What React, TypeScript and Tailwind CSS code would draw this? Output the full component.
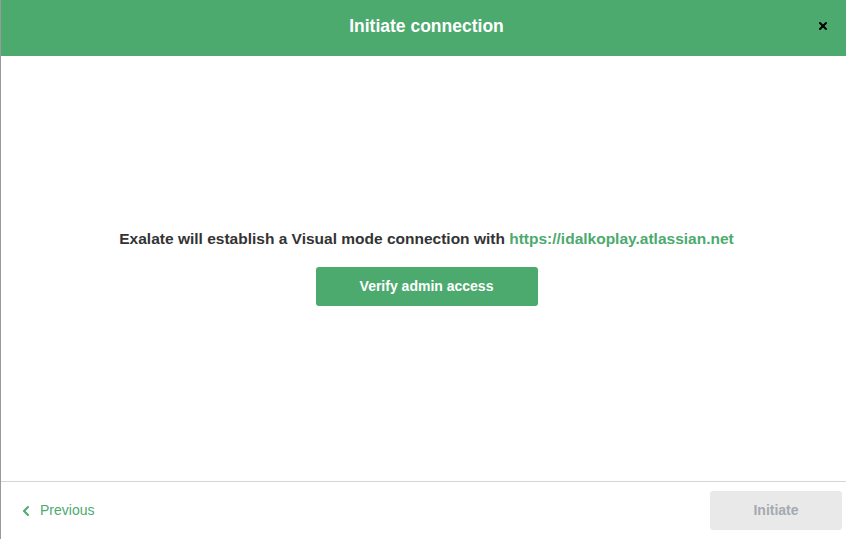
import { ChevronLeft, X } from 'lucide-react'

export default function App() {
  return (
    <div
      className="flex h-[539px] w-[846px] flex-col border-l border-[#9a9a9a] bg-white text-[#333]"
      style={{ fontFamily: '"Liberation Sans", Arial, sans-serif' }}
    >
      <header className="relative flex h-14 shrink-0 items-center justify-center bg-[#4caa6e] pb-[3px] pl-[6px]">
        <h1 className="text-[17.5px] font-bold text-white">Initiate connection</h1>
        <button className="absolute right-[17px] top-[20px] text-black">
          <X size={12} strokeWidth={4} />
        </button>
      </header>

      <main className="flex flex-1 flex-col items-center justify-center gap-[16px] pb-[4px] pl-[6px]">
        <p className="text-[15.5px] font-bold">
          Exalate will establish a Visual mode connection with{' '}
          <span className="text-[#4caa6e]">https://idalkoplay.atlassian.net</span>
        </p>
        <button className="h-[39px] w-[222px] rounded-[3px] bg-[#4caa6e] text-[14px] font-bold text-white">
          Verify admin access
        </button>
      </main>

      <footer className="flex h-[58px] shrink-0 items-center justify-between border-t border-[#d4d4d4] pl-[17px] pr-[4px]">
        <button className="flex items-center gap-[6px] text-[14px] text-[#4caa6e]">
          <ChevronLeft size={16} strokeWidth={3} />
          Previous
        </button>
        <button className="h-[39px] w-[132px] rounded-[3px] bg-[#e9e9e9] text-[14px] font-bold text-[#a4a9b1]">
          Initiate
        </button>
      </footer>
    </div>
  )
}
